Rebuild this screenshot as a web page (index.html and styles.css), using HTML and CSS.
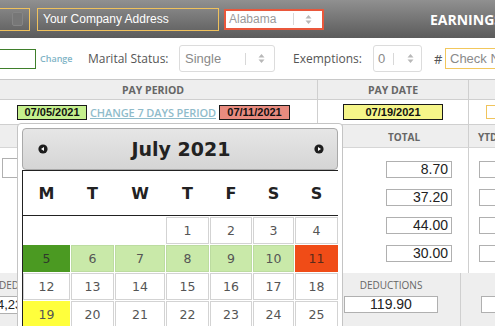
FILE: index.html
```html
<!DOCTYPE html>
<html>
<head>
<meta charset="utf-8">
<link rel="stylesheet" href="styles.css">
</head>
<body>
<div class="page">
  <header class="topbar">
    <div class="logo-box"><span class="logo-ph"></span></div>
    <div class="addr">Your Company Address</div>
    <div class="state">
      <span class="state-val">Alabama</span>
      <i class="sep"></i>
      <svg class="updown" width="7" height="11" viewBox="0 0 7 11"><path d="M0.5 4.5 L3.5 1 L6.5 4.5Z M0.5 6.5 L3.5 10 L6.5 6.5Z" fill="#b8b8b8"/></svg>
    </div>
    <div class="title">EARNINGS STATEMENT</div>
  </header>

  <div class="info">
    <div class="emp-input"></div>
    <a class="change">Change</a>
    <span class="lbl lbl-marital">Marital Status:</span>
    <div class="sel sel-single">
      <span class="sel-val sel-val-single">Single</span>
      <i class="sep"></i>
      <svg class="updown" width="7" height="11" viewBox="0 0 7 11"><path d="M0.5 4.5 L3.5 1 L6.5 4.5Z M0.5 6.5 L3.5 10 L6.5 6.5Z" fill="#b8b8b8"/></svg>
    </div>
    <span class="lbl lbl-ex">Exemptions:</span>
    <div class="sel sel-ex">
      <span class="sel-val sel-val-ex">0</span>
      <i class="sep"></i>
      <svg class="updown" width="7" height="11" viewBox="0 0 7 11"><path d="M0.5 4.5 L3.5 1 L6.5 4.5Z M0.5 6.5 L3.5 10 L6.5 6.5Z" fill="#b8b8b8"/></svg>
    </div>
    <span class="hash">#</span>
    <div class="check">Check No.</div>
  </div>

  <div class="period">
    <div class="ph ph-period">PAY PERIOD</div>
    <div class="ph ph-date">PAY DATE</div>
    <div class="ph ph-extra"></div>
    <div class="pc pc-period">
      <span class="date date-start">07/05/2021</span>
      <a class="change-period">CHANGE 7 DAYS PERIOD</a>
      <span class="date date-end">07/11/2021</span>
    </div>
    <div class="pc pc-date"><span class="date date-pay">07/19/2021</span></div>
    <div class="pc pc-extra"><span class="extra-box"></span></div>
  </div>

  <div class="earn">
    <div class="eh eh-a"></div>
    <div class="eh eh-b">TOTAL</div>
    <div class="eh eh-c">YTD</div>
    <div class="eb eb-a">
      <div class="erow"><span class="box box-a"></span></div>
      <div class="erow"></div>
      <div class="erow"></div>
      <div class="erow"></div>
    </div>
    <div class="eb eb-b">
      <div class="erow"><span class="box box-total">8.70</span></div>
      <div class="erow"><span class="box box-total">37.20</span></div>
      <div class="erow"><span class="box box-total">44.00</span></div>
      <div class="erow"><span class="box box-total">30.00</span></div>
    </div>
    <div class="eb eb-c">
      <div class="erow"><span class="box box-ytd"></span></div>
      <div class="erow"><span class="box box-ytd"></span></div>
      <div class="erow"><span class="box box-ytd"></span></div>
      <div class="erow"><span class="box box-ytd"></span></div>
    </div>
  </div>

  <div class="summary">
    <div class="sc sc-a">
      <div class="sum-label sum-label-a">DED</div>
      <div class="box sum-box-a">4,23</div>
    </div>
    <div class="sc sc-b">
      <div class="sum-inner">
        <div class="sum-label">DEDUCTIONS</div>
        <div class="box sum-box">119.90</div>
      </div>
    </div>
    <div class="sc sc-c">
      <div class="sum-label">&nbsp;</div>
      <div class="box sum-box-c"></div>
    </div>
  </div>

  <div class="datepicker">
    <div class="dp-head">
      <svg class="dp-nav" width="10" height="10" viewBox="0 0 10 10"><circle cx="5" cy="5" r="4.6" fill="#1e1e1e"/><path d="M3 5 L6 2.9 L6 7.1Z" fill="#fff"/></svg>
      <span class="dp-title">July 2021</span>
      <svg class="dp-nav" width="10" height="10" viewBox="0 0 10 10"><circle cx="5" cy="5" r="4.6" fill="#1e1e1e"/><path d="M7 5 L4 2.9 L4 7.1Z" fill="#fff"/></svg>
    </div>
    <div class="dp-grid">
      <div class="dp-days">
        <span>M</span><span>T</span><span>W</span><span>T</span><span>F</span><span>S</span><span>S</span>
      </div>
      <div class="dp-dates">
        <span class="blank"></span><span class="blank"></span><span class="blank"></span>
        <span class="d">1</span><span class="d">2</span><span class="d">3</span><span class="d">4</span>
        <span class="d d-start">5</span><span class="d d-range">6</span><span class="d d-range">7</span><span class="d d-range">8</span><span class="d d-range">9</span><span class="d d-range">10</span><span class="d d-end">11</span>
        <span class="d">12</span><span class="d">13</span><span class="d">14</span><span class="d">15</span><span class="d">16</span><span class="d">17</span><span class="d">18</span>
        <span class="d d-pay">19</span><span class="d">20</span><span class="d">21</span><span class="d">22</span><span class="d">23</span><span class="d">24</span><span class="d">25</span>
      </div>
    </div>
  </div>
</div>
</body>
</html>
```

FILE: styles.css
```css
* { box-sizing: border-box; }
html, body { margin: 0; padding: 0; }
body {
  width: 495px;
  height: 326px;
  overflow: hidden;
  background: #fff;
  font-family: "Open Sans", "Liberation Sans", sans-serif;
}
.page {
  position: relative;
  width: 495px;
  height: 326px;
  overflow: hidden;
}

/* ---------- top bar ---------- */
.topbar {
  height: 38px;
  display: flex;
  align-items: center;
  white-space: nowrap;
  background: linear-gradient(#909090, #5b5b5b);
}
.logo-box {
  flex: none;
  margin-left: -12px;
  width: 42px;
  height: 23px;
  border: 1px solid #efc15c;
  display: flex;
  align-items: center;
  justify-content: flex-end;
  padding-right: 6px;
}
.logo-ph {
  width: 11px;
  height: 14px;
  background: #777;
  border: 1px solid #858585;
  border-radius: 2px;
}
.addr {
  flex: none;
  margin-left: 7px;
  width: 182px;
  height: 23px;
  border: 1px solid #efc15c;
  color: #fff;
  font: 12px "Liberation Sans", Arial, sans-serif;
  display: flex;
  align-items: center;
  padding-left: 5px;
}
.state {
  flex: none;
  margin-left: 5px;
  width: 100px;
  height: 21px;
  border: 2px solid #e9573b;
  background: #fff;
  display: flex;
  align-items: center;
  padding-left: 3px;
  font: 12px "Liberation Sans", Arial, sans-serif;
  color: #9a9a9a;
}
.state-val { width: 64px; }
.sep {
  display: block;
  width: 1px;
  height: 12px;
  background: #d8d8d8;
}
.updown { display: block; margin-left: 11px; }
.title {
  flex: none;
  margin-left: 106px;
  color: #fff;
  font-weight: 700;
  font-size: 14px;
}

/* ---------- info row ---------- */
.info {
  height: 42px;
  display: flex;
  align-items: center;
  white-space: nowrap;
  border-bottom: 1px solid #c8c8c8;
}
.emp-input {
  flex: none;
  margin-left: -10px;
  width: 46px;
  height: 20px;
  border: 1px solid #3f7f2b;
}
.change {
  flex: none;
  margin-left: 4px;
  width: 48px;
  font-size: 9px;
  font-weight: 600;
  color: #7fb4c6;
}
.lbl {
  flex: none;
  font-size: 12px;
  color: #555;
}
.lbl-marital { width: 91px; }
.lbl-ex { margin-left: 18px; width: 80px; }
.sel {
  flex: none;
  height: 27px;
  border: 1px solid #dcdcdc;
  border-radius: 3px;
  display: flex;
  align-items: center;
  font: 13px "Liberation Sans", Arial, sans-serif;
  color: #8a8a8a;
}
.sel-single { width: 96px; padding-left: 5px; }
.sel-val-single { width: 60px; }
.sel-single .updown { margin-left: 12px; }
.sel-ex { width: 49px; padding-left: 4px; }
.sel-val-ex { width: 15px; }
.sel-ex .updown { margin-left: 13px; }
.hash {
  flex: none;
  margin-left: 12px;
  width: 11px;
  font-size: 13px;
  color: #555;
}
.check {
  flex: none;
  width: 80px;
  height: 21px;
  border: 1px solid #f2c75c;
  padding-left: 4px;
  display: flex;
  align-items: center;
  font: 13px "Liberation Sans", Arial, sans-serif;
  color: #8a8a8a;
}

/* ---------- pay period table ---------- */
.period {
  display: grid;
  grid-template-columns: 329px 151px 1fr;
  margin-left: -11px;
}
.ph {
  height: 20px;
  background: #eee;
  border-bottom: 1px solid #cfcfcf;
  font-size: 10.5px;
  font-weight: 700;
  color: #666;
  display: flex;
  align-items: center;
  justify-content: center;
}
.pc {
  height: 25px;
  border-bottom: 1px solid #cfcfcf;
  display: flex;
  align-items: center;
}
.ph-period, .pc-period, .ph-date, .pc-date { border-right: 1px solid #cfcfcf; }
.pc-period { padding-left: 28px; white-space: nowrap; }
.pc-date { justify-content: center; }
.date {
  flex: none;
  height: 15px;
  border: 1px solid #1a1a1a;
  font: bold 11px "Liberation Sans", Arial, sans-serif;
  color: #111;
  display: flex;
  align-items: center;
  justify-content: center;
}
.date-start { width: 70px; background: #c5f08e; }
.date-end { width: 71px; background: #e88b7f; margin-left: 3px; }
.date-pay { width: 100px; height: 16px; background: #f5f589; }
.change-period {
  margin-left: 3px;
  font-size: 11px;
  font-weight: 600;
  letter-spacing: -0.1px;
  color: #90bccb;
  text-decoration: underline;
}
.extra-box {
  margin-left: 17px;
  width: 40px;
  height: 14px;
  border: 1px solid #f0c45c;
}

/* ---------- earnings table ---------- */
.earn {
  display: grid;
  grid-template-columns: 343px 126px 1fr;
}
.eh {
  height: 23px;
  background: #eee;
  border-bottom: 1px solid #d6d6d6;
  font-size: 10px;
  font-weight: 700;
  color: #666;
  display: flex;
  align-items: center;
  padding-top: 2px;
}
.eh-a, .eh-b, .eb-a, .eb-b { border-right: 1px solid #cfcfcf; }
.eh-b { justify-content: center; padding-right: 3px; }
.eh-c { padding-left: 9px; }
.eb {
  height: 125px;
  padding-top: 8px;
}
.erow {
  height: 28px;
  display: flex;
  align-items: flex-start;
}
.box {
  display: block;
  border: 1px solid #b0b0b0;
  background: #fff;
  font: 14px "Liberation Sans", Arial, sans-serif;
  color: #222;
}
.box-a { margin-left: 2px; margin-top: 2px; width: 80px; height: 20px; }
.box-total {
  margin-left: 43px;
  margin-top: 5px;
  width: 66px;
  height: 17px;
  line-height: 15px;
  text-align: right;
  padding-right: 3px;
}
.box-ytd { margin-left: 10px; margin-top: 5px; width: 60px; height: 17px; }

/* ---------- summary ---------- */
.summary {
  display: grid;
  grid-template-columns: 343px 118px 1fr;
  background: #eee;
  height: 53px;
}
.sc { padding-top: 5px; }
.sc-a, .sc-b { border-right: 1px solid #cfcfcf; }
.sum-label {
  height: 14px;
  line-height: 14px;
  font-size: 10px;
  color: #666;
}
.sum-label-a { margin-left: -1px; }
.sum-inner { margin-left: 1px; width: 94px; text-align: center; }
.sum-box {
  margin-top: 4px;
  height: 17px;
  line-height: 15px;
  text-align: center;
  font-size: 14px;
}
.sum-box-a {
  margin-top: 4px;
  margin-left: -20px;
  width: 200px;
  height: 18px;
  line-height: 16px;
  padding-left: 16px;
  font-size: 13px;
}
.sum-box-c { margin-top: 4px; margin-left: 20px; width: 60px; height: 17px; }

/* ---------- datepicker popup ---------- */
.datepicker {
  position: absolute;
  left: 17px;
  top: 123px;
  width: 326px;
  height: 215px;
  z-index: 2;
  background: #fff;
  border: 1px solid #c4c4c4;
  border-radius: 4px;
  padding: 4px 4px 0;
}
.dp-head {
  height: 42px;
  border: 1px solid #a9a9a9;
  border-radius: 4px;
  background: linear-gradient(#e6e6e6, #d5d5d5);
  display: flex;
  align-items: center;
  justify-content: space-between;
  padding: 0 13px 0 15px;
}
.dp-nav { display: block; }
.dp-title {
  font: bold 19px "DejaVu Sans", Verdana, sans-serif;
  color: #222;
}
.dp-grid {
  border-top: 1px solid #222;
  border-left: 1px solid #222;
}
.dp-days, .dp-dates {
  display: grid;
  grid-template-columns: 47px 43px 50px 43px 42px 41px 43px;
  column-gap: 1px;
}
.dp-days {
  height: 45px;
  border-bottom: 1px solid #222;
  align-items: center;
  justify-items: center;
  font: bold 16px "DejaVu Sans", Verdana, sans-serif;
  color: #222;
}
.dp-dates {
  padding-top: 1px;
  grid-auto-rows: 27px;
  row-gap: 1px;
  font: 12.5px "DejaVu Sans", Verdana, sans-serif;
  color: #555;
}
.d {
  border: 1px solid #d3d3d3;
  display: flex;
  align-items: center;
  justify-content: center;
  background: #fff;
}
.d-start { background: #4b9a22; border-color: #4b9a22; color: #2f3a2a; }
.d-range { background: #c9e9a9; border-color: #bcdca0; }
.d-end { background: #f04c17; border-color: #f04c17; color: #5a2a1a; }
.d-pay { background: #ffff3c; border-color: #ffff3c; }
```
